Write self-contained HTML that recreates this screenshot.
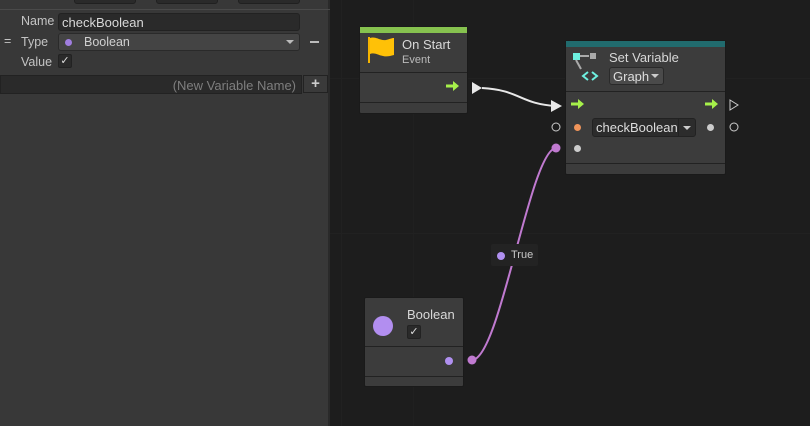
<!DOCTYPE html><html><head><style>
*{box-sizing:border-box;margin:0;padding:0}
body{width:810px;height:426px;overflow:hidden;background:#1d1d1d;font-family:"Liberation Sans",sans-serif;position:relative;color:#d2d2d2}
.a{position:absolute}
.panel{left:0;top:0;width:330px;height:426px;background:#383838;border-right:2px solid #2a2a2a}
.t{font-size:12.5px;color:#c4c4c4}
.node{position:absolute;background:#3c3c3c;border:1px solid #1a1a1a;border-radius:2px}
.sep{position:absolute;left:0;right:0;height:1px;background:#222}
</style></head><body>
<div class="a" style="left:341px;top:0;width:1px;height:426px;background:#212121"></div>
<div class="a" style="left:413px;top:0;width:1px;height:426px;background:#202020"></div>
<div class="a" style="left:0;top:78px;width:810px;height:1px;background:#212121"></div>
<div class="a" style="left:0;top:233px;width:810px;height:1px;background:#212121"></div>

<div class="a panel">
<div class="a" style="left:74px;top:-4px;width:62px;height:8px;background:#2a2a2a;border:1px solid #202020;border-radius:3px"></div>
<div class="a" style="left:156px;top:-4px;width:62px;height:8px;background:#2a2a2a;border:1px solid #202020;border-radius:3px"></div>
<div class="a" style="left:238px;top:-4px;width:62px;height:8px;background:#2a2a2a;border:1px solid #202020;border-radius:3px"></div>
<div class="a" style="left:0;top:9px;width:330px;height:1px;background:#4a4a4a"></div>
<div class="a t" style="left:21px;top:14px">Name</div>
<div class="a" style="left:58px;top:13px;width:242px;height:18px;background:#2a2a2a;border:1px solid #222;border-radius:3px;font-size:13px;padding:1px 3px;color:#d8d8d8">checkBoolean</div>
<div class="a t" style="left:4px;top:34px">=</div>
<div class="a t" style="left:21px;top:35px">Type</div>
<div class="a" style="left:58px;top:33px;width:242px;height:18px;background:#444;border:1px solid #2a2a2a;border-radius:3px"></div>
<div class="a" style="left:65px;top:39px;width:7px;height:7px;border-radius:50%;background:#a07ee0"></div>
<div class="a t" style="left:84px;top:35px;color:#d0d0d0">Boolean</div>
<div class="a" style="left:286px;top:40px;border-left:4px solid transparent;border-right:4px solid transparent;border-top:4px solid #bbb"></div>
<div class="a" style="left:310px;top:41px;width:9px;height:2px;background:#bbb"></div>
<div class="a t" style="left:21px;top:55px">Value</div>
<div class="a" style="left:58px;top:54px;width:14px;height:14px;background:#2a2a2a;border:1px solid #222;border-radius:2px;font-size:11px;color:#ddd;text-align:center;line-height:13px">✓</div>
<div class="a" style="left:0;top:75px;width:302px;height:19px;background:#2a2a2a;border:1px solid #222;font-size:13px;color:#7e7e7e;text-align:right;padding:2px 5px">(New Variable Name)</div>
<div class="a" style="left:303px;top:75px;width:25px;height:18px;background:#3a3a3a;border:1px solid #222;font-size:15px;font-weight:bold;color:#ccc;text-align:center;line-height:16px">+</div>
</div>

<svg class="a" style="left:0;top:0" width="810" height="426">
<path d="M482 88 C520 90 520 104 556 106" stroke="#e8e8e8" stroke-width="2" fill="none"/>
<polygon points="472,82 482,88 472,94" fill="#e8e8e8"/>
<polygon points="551,100 562,106 551,112" fill="#e8e8e8"/>
<path d="M472 360 C500 360 530 150 556 148" stroke="#c07ad0" stroke-width="2" fill="none"/>
<circle cx="472" cy="360" r="4.5" fill="#c07ad0"/>
<circle cx="556" cy="148" r="4.5" fill="#c07ad0"/>
<circle cx="556" cy="127" r="4" fill="none" stroke="#ccc" stroke-width="1"/>
<circle cx="734" cy="127" r="4" fill="none" stroke="#ccc" stroke-width="1"/>
<polygon points="730,100 738,105 730,110" fill="none" stroke="#ccc" stroke-width="1"/>
</svg>

<div class="node" style="left:359px;top:26px;width:109px;height:88px">
<div class="a" style="left:0;top:0;right:0;height:6px;background:#86c24f"></div>
<svg class="a" style="left:8px;top:10px" width="28" height="28"><rect x="0" y="0" width="2" height="26" fill="#f6b400"/><path d="M2 1 C8 -1 12 4 18 3 C22 2 24 1 26 1 L26 18 C22 19 19 20 15 19 C10 18 6 15 2 17 Z" fill="#ffc107"/></svg>
<div class="a" style="left:42px;top:10px;font-size:13px;color:#d8d8d8">On Start</div>
<div class="a" style="left:42px;top:27px;font-size:11px;color:#bbb">Event</div>
<div class="sep" style="top:45px"></div>
<svg class="a" style="left:86px;top:53px" width="14" height="12"><path d="M0 6 H8" stroke="#a6f04a" stroke-width="3"/><polygon points="7,1 13,6 7,11" fill="#a6f04a"/></svg>
<div class="sep" style="top:75px"></div>
</div>

<div class="node" style="left:565px;top:40px;width:161px;height:135px">
<div class="a" style="left:0;top:0;right:0;height:6px;background:#216b6e"></div>
<svg class="a" style="left:6px;top:9px" width="30" height="34"><rect x="1" y="3" width="7" height="7" fill="#6ef0e0"/><path d="M8 6 H17" stroke="#aaa" stroke-width="2"/><rect x="18" y="3" width="6" height="6" fill="#aaa"/><path d="M4 10 L9 19" stroke="#aaa" stroke-width="2"/><path d="M16 22 L11 26 L16 30 M20 22 L25 26 L20 30" stroke="#6ef0e0" stroke-width="2" fill="none"/></svg>
<div class="a" style="left:43px;top:9px;font-size:13px;color:#d8d8d8">Set Variable</div>
<div class="a" style="left:43px;top:26px;width:55px;height:18px;background:#4a4a4a;border:1px solid #2a2a2a;border-radius:3px;font-size:13px;color:#ddd;padding:1px 3px">Graph</div>
<div class="a" style="left:85px;top:33px;border-left:4px solid transparent;border-right:4px solid transparent;border-top:4px solid #ccc"></div>
<div class="sep" style="top:50px"></div>
<svg class="a" style="left:5px;top:57px" width="14" height="12"><path d="M0 6 H8" stroke="#a6f04a" stroke-width="3"/><polygon points="7,1 13,6 7,11" fill="#a6f04a"/></svg>
<svg class="a" style="left:139px;top:57px" width="14" height="12"><path d="M0 6 H8" stroke="#a6f04a" stroke-width="3"/><polygon points="7,1 13,6 7,11" fill="#a6f04a"/></svg>
<div class="a" style="left:8px;top:83px;width:7px;height:7px;border-radius:50%;background:#f0945a"></div>
<div class="a" style="left:26px;top:77px;width:104px;height:19px;background:#2c2c2c;border:1px solid #222;border-radius:3px;font-size:13px;color:#ddd;padding:1px 3px">checkBoolean</div>
<div class="a" style="left:112px;top:78px;width:1px;height:17px;background:#222"></div>
<div class="a" style="left:117px;top:85px;border-left:4px solid transparent;border-right:4px solid transparent;border-top:4px solid #ccc"></div>
<div class="a" style="left:141px;top:83px;width:7px;height:7px;border-radius:50%;background:#ccc"></div>
<div class="a" style="left:8px;top:104px;width:7px;height:7px;border-radius:50%;background:#ccc"></div>
<div class="sep" style="top:122px"></div>
</div>

<div class="a" style="left:491px;top:244px;width:47px;height:22px;background:#232323;border-radius:2px"></div>
<div class="a" style="left:497px;top:252px;width:8px;height:8px;border-radius:50%;background:#b090f0"></div>
<div class="a" style="left:511px;top:249px;font-size:11px;color:#c8c8c8">True</div>

<div class="node" style="left:364px;top:297px;width:100px;height:90px">
<div class="a" style="left:8px;top:18px;width:20px;height:20px;border-radius:50%;background:#b28ef0"></div>
<div class="a" style="left:42px;top:9px;font-size:13px;color:#d8d8d8">Boolean</div>
<div class="a" style="left:42px;top:27px;width:14px;height:14px;background:#2a2a2a;border:1px solid #222;border-radius:2px;font-size:11px;color:#ddd;text-align:center;line-height:13px">✓</div>
<div class="sep" style="top:48px"></div>
<div class="a" style="left:80px;top:59px;width:8px;height:8px;border-radius:50%;background:#b090f0"></div>
<div class="sep" style="top:78px"></div>
</div>
</body></html>
